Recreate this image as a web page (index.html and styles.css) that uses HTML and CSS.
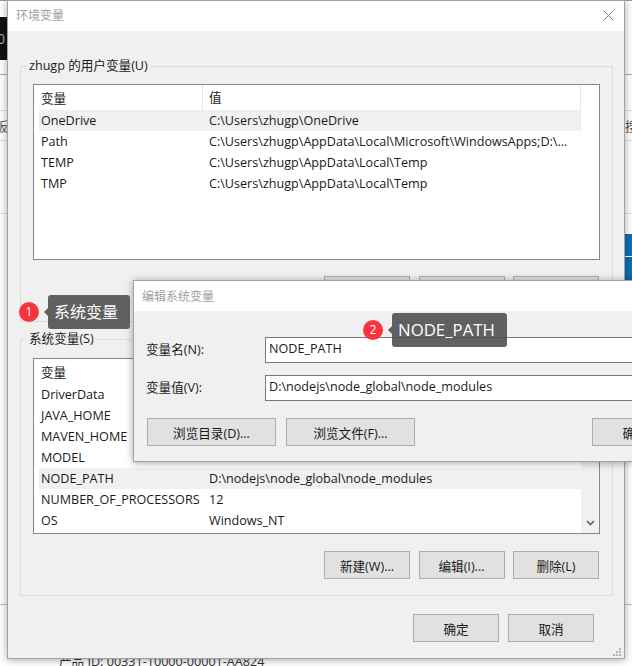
FILE: index.html
```html
<!DOCTYPE html>
<html lang="zh-CN">
<head>
    <meta charset="UTF-8">
    <title>环境变量</title>
    <link rel="stylesheet" href="styles.css">
</head>
<body>
    <!-- 后面的系统窗口,只露出边缘 -->
    <div class="backdrop">
        <div class="back-top"></div>
        <div class="back-black">0</div>
        <div class="back-line back-line-a"></div>
        <div class="back-line back-line-b"></div>
        <div class="back-line back-line-c"></div>
        <div class="back-line back-line-d"></div>
        <div class="back-line back-line-e"></div>
        <span class="back-char back-char-l">板</span>
        <span class="back-char back-char-r">搜</span>
        <div class="back-blue"></div>
        <div class="back-id">产品 ID: 00331-10000-00001-AA824</div>
    </div>

    <!-- 环境变量 -->
    <div class="window main-window">
        <div class="titlebar main-title">
            <span>环境变量</span>
            <svg class="close" width="11" height="11" viewBox="0 0 11 11"><path d="M0.5 0.5L10.5 10.5M10.5 0.5L0.5 10.5" stroke="#808080" fill="none"/></svg>
        </div>
        <div class="main-body">
            <fieldset class="group group-user">
                <legend>zhugp 的用户变量(U)</legend>
                <div class="list list-user">
                    <div class="row head"><span class="name">变量</span><span class="value">值</span></div>
                    <div class="row selected"><span class="name">OneDrive</span><span class="value">C:\Users\zhugp\OneDrive</span></div>
                    <div class="row"><span class="name">Path</span><span class="value">C:\Users\zhugp\AppData\Local\Microsoft\WindowsApps;D:\...</span></div>
                    <div class="row"><span class="name">TEMP</span><span class="value">C:\Users\zhugp\AppData\Local\Temp</span></div>
                    <div class="row"><span class="name">TMP</span><span class="value">C:\Users\zhugp\AppData\Local\Temp</span></div>
                </div>
                <div class="btn-row btn-row-user">
                    <button class="btn"></button>
                    <button class="btn"></button>
                    <button class="btn"></button>
                </div>
            </fieldset>
            <fieldset class="group group-system">
                <legend>系统变量(S)</legend>
                <div class="list list-system">
                    <div class="row head plain"><span class="name">变量</span></div>
                    <div class="row"><span class="name">DriverData</span></div>
                    <div class="row"><span class="name">JAVA_HOME</span></div>
                    <div class="row"><span class="name">MAVEN_HOME</span></div>
                    <div class="row"><span class="name">MODEL</span></div>
                    <div class="row selected"><span class="name">NODE_PATH</span><span class="value">D:\nodejs\node_global\node_modules</span></div>
                    <div class="row"><span class="name">NUMBER_OF_PROCESSORS</span><span class="value">12</span></div>
                    <div class="row"><span class="name">OS</span><span class="value">Windows_NT</span></div>
                    <div class="scrollbar">
                        <svg width="9" height="6" viewBox="0 0 9 6"><path d="M1 1L4.5 4.5L8 1" stroke="#606060" stroke-width="1.6" fill="none"/></svg>
                    </div>
                </div>
                <div class="btn-row">
                    <button class="btn">新建(W)...</button>
                    <button class="btn">编辑(I)...</button>
                    <button class="btn">删除(L)</button>
                </div>
            </fieldset>
            <div class="btn-row footer-row">
                <button class="btn">确定</button>
                <button class="btn">取消</button>
            </div>
        </div>
        <svg class="grip" width="9" height="9" viewBox="0 0 9 9"><path d="M6 0h2v2H6zM3 3h2v2H3zM6 3h2v2H6zM0 6h2v2H0zM3 6h2v2H3zM6 6h2v2H6z" fill="#b4b4b4"/></svg>
    </div>

    <!-- 编辑系统变量 -->
    <div class="window edit-window">
        <div class="titlebar"><span>编辑系统变量</span></div>
        <div class="edit-body">
            <div class="field">
                <label>变量名(N):</label>
                <div class="input">NODE_PATH</div>
            </div>
            <div class="field">
                <label>变量值(V):</label>
                <div class="input">D:\nodejs\node_global\node_modules</div>
            </div>
            <div class="edit-buttons">
                <button class="btn btn-wide">浏览目录(D)...</button>
                <button class="btn btn-wide">浏览文件(F)...</button>
                <button class="btn btn-last">确定</button>
            </div>
        </div>
    </div>

    <!-- 标注 -->
    <div class="note note-one">
        <span class="badge">1</span>
        <span class="tip">系统变量</span>
    </div>
    <div class="note note-two">
        <span class="badge">2</span>
        <span class="tip tip-latin">NODE_PATH</span>
    </div>
</body>
</html>
```

FILE: styles.css
```css
* {
    box-sizing: border-box;
}
html, body {
    height: 100%;
}
body {
    margin: 0;
    overflow: hidden;
    position: relative;
    background-color: #ffffff;
    color: #1a1a1a;
    font-family: "Open Sans", "Noto Sans CJK SC", sans-serif;
    font-size: 12.6px;
}

/* backdrop */
.backdrop {
    position: absolute;
    inset: 0;
    overflow: hidden;
}
.back-top {
    position: absolute;
    left: 0;
    top: 0;
    width: 100%;
    height: 1px;
    background-color: #999999;
}
.back-black {
    position: absolute;
    left: 0;
    top: 17px;
    width: 8px;
    height: 43px;
    background-color: #111111;
    color: #aaaaaa;
    line-height: 43px;
    font-size: 14px;
    text-indent: -3px;
    overflow: hidden;
}
.back-line {
    position: absolute;
    left: 0;
    width: 100%;
    height: 1px;
    background-color: #dddddd;
}
.back-line-a { top: 74px; background-color: #aaaaaa; }
.back-line-b { top: 110px; }
.back-line-c { top: 140px; }
.back-line-d { top: 213px; }
.back-line-e { top: 604px; background-color: #bbbbbb; }
.back-char {
    position: absolute;
    top: 116px;
    color: #555555;
    font-size: 13px;
    width: 8px;
    overflow: hidden;
}
.back-char-l { left: 0; direction: rtl; }
.back-char-r { left: 625px; }
.back-blue {
    position: absolute;
    left: 625px;
    top: 234px;
    width: 7px;
    height: 47px;
    background-color: #0b6fb8;
    border-bottom: 24px solid #0b6fb8;
    box-shadow: inset 0 -1px 0 #ffffff;
}
.back-id {
    position: absolute;
    left: 59px;
    top: 651px;
    color: #333333;
}

/* windows */
.window {
    position: absolute;
    background-color: #f0f0f0;
    border: 1px solid #a3a3a3;
    box-shadow: 0 1px 8px rgba(0, 0, 0, 0.35);
    display: flex;
    flex-direction: column;
}
.main-window {
    left: 7px;
    top: 0;
    width: 618px;
    height: 659px;
}
.edit-window {
    left: 133px;
    top: 280px;
    width: 499px;
    height: 182px;
    border-right: none;
    overflow: hidden;
}
.titlebar {
    height: 30px;
    flex: none;
    background-color: #ffffff;
    color: #a0a0a0;
    font-size: 12px;
    padding: 0 9px 0 8px;
    display: flex;
    align-items: center;
    justify-content: space-between;
}
.main-title {
    padding-bottom: 2px;
}
.close {
    margin-right: 1px;
}
.grip {
    position: absolute;
    right: 2px;
    bottom: 1px;
}

/* main window body */
.main-body {
    flex: 1;
    padding: 27px 11px 0 12px;
    display: flex;
    flex-direction: column;
}
.group {
    margin: 0;
    padding: 0 12px;
    border: 1px solid #dcdcdc;
    width: 593px;
    min-width: 0;
}
.group legend {
    padding: 0 2px;
    margin-left: -6px;
    line-height: 16px;
}
.group-user {
    height: 264px;
    margin-bottom: 9px;
}
.group-system {
    height: 265px;
}
.list {
    background-color: #ffffff;
    border: 1px solid #828790;
    position: relative;
    padding: 0 5px;
    height: 176px;
    overflow: hidden;
}
.list-user {
    margin-top: 10px;
}
.list-system {
    margin-top: 11px;
}
.row {
    height: 21px;
    width: 542px;
    display: flex;
    align-items: center;
    white-space: nowrap;
}
.head {
    height: 25px;
    border-right: 1px solid #e5e5e5;
}
.head .name {
    border-right: 1px solid #e5e5e5;
    height: 100%;
    display: flex;
    align-items: center;
    padding-bottom: 1px;
}
.head .value {
    padding-bottom: 2px;
}
.head.plain,
.head.plain .name {
    border-right: none;
}
.selected {
    background-color: #f0f0f0;
}
.name {
    width: 164px;
    flex: none;
    padding-left: 2px;
}
.value {
    padding-left: 6px;
}
.scrollbar {
    position: absolute;
    right: 0;
    top: 0;
    bottom: 0;
    width: 18px;
    background-color: #f0f0f0;
    display: flex;
    align-items: flex-end;
    justify-content: center;
    padding-bottom: 7px;
}
.btn-row {
    display: flex;
    justify-content: flex-end;
    gap: 8.5px;
    margin-top: 17px;
    padding-right: 1px;
}
.btn-row-user {
    margin-top: 16px;
}
.footer-row {
    gap: 9px;
    margin-top: 18px;
    padding-right: 19px;
}
.btn {
    width: 86px;
    height: 28px;
    flex: none;
    padding: 0;
    margin: 0;
    background-color: #e1e1e1;
    border: 1px solid #adadad;
    color: #1a1a1a;
    font-family: inherit;
    font-size: 12.6px;
}

/* edit window body */
.edit-body {
    flex: 1;
    padding: 26px 0 0 12px;
}
.field {
    display: flex;
    align-items: center;
    height: 26px;
    margin-bottom: 12px;
}
.field label {
    width: 119px;
    flex: none;
    padding-bottom: 3px;
}
.input {
    flex: 1;
    height: 26px;
    background-color: #ffffff;
    border: 1px solid #7a7a7a;
    border-right: none;
    padding-left: 3px;
    line-height: 22px;
}
.edit-buttons {
    display: flex;
    gap: 10px;
    padding-left: 1px;
    margin-top: 17px;
}
.btn-wide {
    width: 129px;
}
.btn-last {
    margin-left: 167px;
}

/* notes */
.note {
    position: absolute;
    display: flex;
    align-items: center;
    gap: 9px;
}
.note-one {
    left: 19px;
    top: 295px;
}
.note-two {
    left: 363px;
    top: 313px;
}
.badge {
    width: 20px;
    height: 20px;
    border-radius: 50%;
    background-color: #f9333e;
    color: #ffffff;
    font-size: 12px;
    line-height: 20px;
    text-align: center;
}
.tip {
    position: relative;
    height: 34px;
    line-height: 34px;
    padding: 0 12px 0 6px;
    background-color: rgba(80, 80, 80, 0.9);
    color: #ffffff;
    font-size: 16px;
    border-radius: 3px;
}
.tip-latin {
    font-size: 16.8px;
}
.tip::before {
    content: "";
    position: absolute;
    left: -4px;
    top: 13px;
    border-style: solid;
    border-width: 4px 4px 4px 0;
    border-color: transparent rgba(80, 80, 80, 0.9) transparent transparent;
}
```
